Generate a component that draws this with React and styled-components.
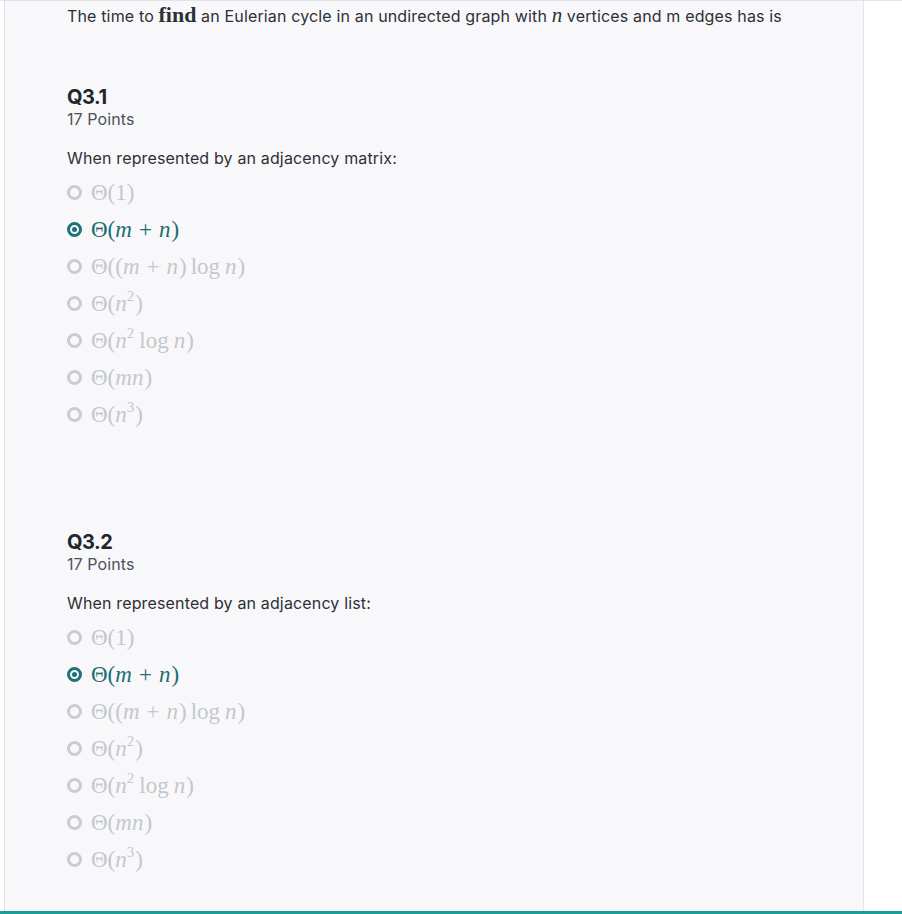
import React from "react";
import styled, { createGlobalStyle } from "styled-components";

const GlobalStyle = createGlobalStyle`
  html, body {
    margin: 0;
    padding: 0;
    background: #ffffff;
  }
  body {
    font-family: Inter, "Open Sans", sans-serif;
    color: #2d3035;
  }
`;

const Page = styled.div`
  height: 914px;
  display: flex;
  flex-direction: column;
  overflow: hidden;
  border-top: 1px solid #e3e4e8;
  box-sizing: border-box;
`;

const Panel = styled.div`
  flex: 1;
  margin-left: 4px;
  width: 860px;
  box-sizing: border-box;
  background: #f8f8fb;
  border-left: 1px solid #e3e4ea;
  border-right: 1px solid #e3e4ea;
  padding: 2px 0 0 62px;
`;

const BottomBar = styled.div`
  height: 3px;
  background: #1a9d95;
`;

const Intro = styled.p`
  margin: 0;
  font-size: 16px;
  letter-spacing: 0.15px;
  line-height: 24px;
`;

const Bold = styled.span`
  font-family: "Liberation Serif", serif;
  font-weight: bold;
  font-size: 22px;
  letter-spacing: 0;
`;

const MathVar = styled.span`
  font-family: "Liberation Serif", serif;
  font-style: italic;
  font-size: 21px;
  letter-spacing: 0;
`;

const Question = styled.section`
  margin-top: ${(p) => p.$top}px;
`;

const Title = styled.h2`
  margin: 0;
  font-size: 20px;
  line-height: 24px;
  font-weight: 700;
  color: #22262b;
  letter-spacing: -0.5px;
`;

const Points = styled.div`
  font-size: 16px;
  letter-spacing: 0.1px;
  line-height: 21px;
  color: #4d5159;
`;

const Prompt = styled.div`
  margin-top: 17px;
  font-size: 16px;
  letter-spacing: 0.15px;
  line-height: 22px;
`;

const Options = styled.div`
  margin-top: 5px;
  display: flex;
  flex-direction: column;
`;

const Option = styled.label`
  display: flex;
  align-items: center;
  gap: 9px;
  height: 37px;
  color: ${(p) => (p.$checked ? "#1d6d70" : "#c3c8ca")};
`;

const Radio = styled.span`
  width: 15px;
  height: 15px;
  box-sizing: border-box;
  border-radius: 50%;
  border: 3px solid ${(p) => (p.$checked ? "#1d7476" : "#c9cdce")};
  display: flex;
  align-items: center;
  justify-content: center;
  flex-shrink: 0;
  &::after {
    content: "";
    display: ${(p) => (p.$checked ? "block" : "none")};
    width: 5px;
    height: 5px;
    border-radius: 50%;
    background: #1d7476;
  }
`;

const Formula = styled.span`
  font-family: "Liberation Serif", serif;
  font-size: 23px;
  line-height: 28px;
  white-space: nowrap;
`;

const I = styled.i`
  font-style: italic;
  margin-right: 1px;
`;

const Sup = styled.sup`
  font-size: 15px;
  line-height: 0;
  vertical-align: 10px;
  margin: 0 1px 0 -1px;
`;

const Op = styled.span`
  margin: 0 7px 0 6px;
`;

const Fn = styled.span`
  margin: 0 5px 0 4px;
`;

const formulas = [
  <>Θ(1)</>,
  <>Θ(<I>m</I><Op>+</Op><I>n</I>)</>,
  <>Θ((<I>m</I><Op>+</Op><I>n</I>)<Fn>log</Fn><I>n</I>)</>,
  <>Θ(<I>n</I><Sup>2</Sup>)</>,
  <>Θ(<I>n</I><Sup>2</Sup><Fn>log</Fn><I>n</I>)</>,
  <>Θ(<I>mn</I>)</>,
  <>Θ(<I>n</I><Sup>3</Sup>)</>,
];

const questions = [
  { id: "Q3.1", top: 57, prompt: "When represented by an adjacency matrix:" },
  { id: "Q3.2", top: 97, prompt: "When represented by an adjacency list:" },
];

function QuestionBlock({ q }) {
  return (
    <Question $top={q.top}>
      <Title>{q.id}</Title>
      <Points>17 Points</Points>
      <Prompt>{q.prompt}</Prompt>
      <Options>
        {formulas.map((f, i) => (
          <Option key={i} $checked={i === 1}>
            <Radio $checked={i === 1} />
            <Formula>{f}</Formula>
          </Option>
        ))}
      </Options>
    </Question>
  );
}

export default function App() {
  return (
    <>
      <GlobalStyle />
      <Page>
        <Panel>
          <Intro>
            The time to <Bold>find</Bold> an Eulerian cycle in an undirected
            graph with <MathVar>n</MathVar> vertices and m edges has is
          </Intro>
          {questions.map((q) => (
            <QuestionBlock key={q.id} q={q} />
          ))}
        </Panel>
        <BottomBar />
      </Page>
    </>
  );
}
